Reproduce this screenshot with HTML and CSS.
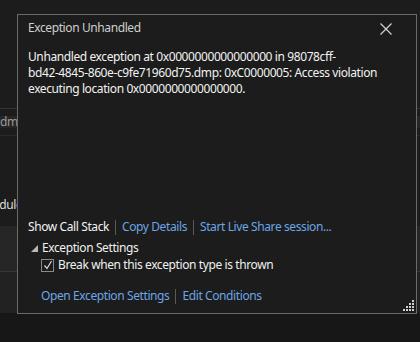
FILE: index.html
```html
<!DOCTYPE html>
<html lang="en">
<head>
    <meta charset="UTF-8">
    <title>Exception Unhandled</title>
    <link rel="stylesheet" href="styles.css">
</head>
<body>
    <div class="editor">
        <div class="pane-top"></div>
        <div class="tab-row"><span class="tab-text">dmp</span></div>
        <div class="pane-mid"></div>
        <div class="module-row"><span class="module-text">Module</span></div>
        <div class="grid-row"></div>
        <div class="grid-row alt"></div>
        <div class="status-area"></div>
    </div>

    <div class="popup">
        <div class="popup-head">
            <span class="popup-title">Exception Unhandled</span>
            <svg class="close-icon" width="12" height="12" viewBox="0 0 12 12">
                <path d="M0.5 0.5 L11.5 11.5 M11.5 0.5 L0.5 11.5" stroke="#d4d4d4" stroke-width="1.2" fill="none"/>
            </svg>
        </div>

        <p class="message">Unhandled exception at 0x0000000000000000 in 98078cff-<br>bd42-4845-860e-c9fe71960d75.dmp: 0xC0000005: Access violation<br>executing location 0x0000000000000000.</p>

        <div class="spacer"></div>

        <div class="links">
            <span class="link plain">Show Call Stack</span>
            <span class="sep"></span>
            <span class="link">Copy Details</span>
            <span class="sep"></span>
            <span class="link">Start Live Share session...</span>
        </div>

        <div class="settings">
            <div class="settings-head">
                <svg class="tri" width="7" height="7" viewBox="0 0 7 7">
                    <path d="M7 0 L7 7 L0 7 Z" fill="#b8b8b8"/>
                </svg>
                <span>Exception Settings</span>
            </div>
            <label class="check-row">
                <span class="checkbox">
                    <svg width="10" height="10" viewBox="0 0 10 10">
                        <path d="M1.5 5.5 L4 8.5 L8.5 1" stroke="#d8d8d8" stroke-width="1.2" fill="none"/>
                    </svg>
                </span>
                <span>Break when this exception type is thrown</span>
            </label>
            <div class="links sub">
                <span class="link">Open Exception Settings</span>
                <span class="sep"></span>
                <span class="link">Edit Conditions</span>
            </div>
        </div>

        <svg class="grip" width="11" height="11" viewBox="0 0 11 11">
            <rect x="9" y="0" width="2" height="2" fill="#d0d0d0"/>
            <rect x="6" y="3" width="2" height="2" fill="#d0d0d0"/>
            <rect x="9" y="3" width="2" height="2" fill="#d0d0d0"/>
            <rect x="3" y="6" width="2" height="2" fill="#d0d0d0"/>
            <rect x="6" y="6" width="2" height="2" fill="#d0d0d0"/>
            <rect x="9" y="6" width="2" height="2" fill="#d0d0d0"/>
            <rect x="0" y="9" width="2" height="2" fill="#d0d0d0"/>
            <rect x="3" y="9" width="2" height="2" fill="#d0d0d0"/>
            <rect x="6" y="9" width="2" height="2" fill="#d0d0d0"/>
            <rect x="9" y="9" width="2" height="2" fill="#d0d0d0"/>
        </svg>
    </div>
</body>
</html>
```

FILE: styles.css
```css
* {
    margin: 0;
    padding: 0;
    box-sizing: border-box;
}

body {
    width: 420px;
    height: 342px;
    overflow: hidden;
    position: relative;
    background: #171717;
    font-family: 'Noto Sans', 'Open Sans', sans-serif;
    font-size: 12px;
    letter-spacing: -0.4px;
    color: #f0f0f0;
}

.editor {
    display: flex;
    flex-direction: column;
    height: 100%;
    background: #1c1c1c;
}

.pane-top {
    height: 109px;
    border-bottom: 1px solid #333;
}

.tab-row {
    height: 12px;
    margin-top: 7px;
    background: #262626;
    overflow: hidden;
    white-space: nowrap;
    line-height: 12px;
}

.tab-text {
    display: inline-block;
    color: #9a9a9a;
}

.pane-mid {
    height: 8px;
    border-bottom: 1px solid #2a2a2a;
}

.module-row {
    height: 90px;
    padding-top: 62px;
    overflow: hidden;
    white-space: nowrap;
    line-height: 14px;
}

.module-text {
    display: inline-block;
    margin-left: -18px;
    color: #dcdcdc;
}

.grid-row {
    height: 46px;
    background: #262626;
    border-bottom: 1px solid #383838;
}

.grid-row.alt {
    height: 41px;
    background: #222;
    border-bottom: none;
}

.status-area {
    flex: 1;
    background: #171717;
}

.popup {
    position: absolute;
    left: 17px;
    top: 14px;
    width: 400px;
    height: 300px;
    background: #1b1c1b;
    border: 1px solid #6a6a6a;
    display: flex;
    flex-direction: column;
    padding: 0 10px 9px 10px;
}

.popup-head {
    display: flex;
    justify-content: space-between;
    align-items: center;
    height: 26px;
}

.popup-title {
    color: #cfcfcf;
    line-height: 26px;
}

.close-icon {
    margin-right: 14px;
    margin-top: 1px;
}

.message {
    margin-top: 8px;
    line-height: 16px;
    color: #f2f2f2;
    white-space: nowrap;
}

.spacer {
    flex: 1;
}

.links {
    display: flex;
    align-items: center;
    line-height: 16px;
    white-space: nowrap;
}

.link {
    color: #6da5e6;
}

.link.plain {
    color: #f2f2f2;
}

.sep {
    width: 1px;
    height: 15px;
    background: #5a5a5a;
    margin: 0 6px;
}

.settings {
    margin-top: 5px;
}

.settings-head {
    display: flex;
    align-items: center;
    gap: 4px;
    line-height: 16px;
    padding-left: 3px;
}

.tri {
    margin-top: 1px;
}

.check-row {
    display: flex;
    align-items: center;
    gap: 4px;
    margin-top: 1px;
    padding-left: 13px;
    line-height: 16px;
}

.checkbox {
    width: 13px;
    height: 13px;
    border: 1px solid #8a8a8a;
    display: flex;
    align-items: center;
    justify-content: center;
}

.links.sub {
    margin-top: 15px;
    padding-left: 13px;
}

.grip {
    position: absolute;
    right: 2px;
    bottom: 2px;
}
```
